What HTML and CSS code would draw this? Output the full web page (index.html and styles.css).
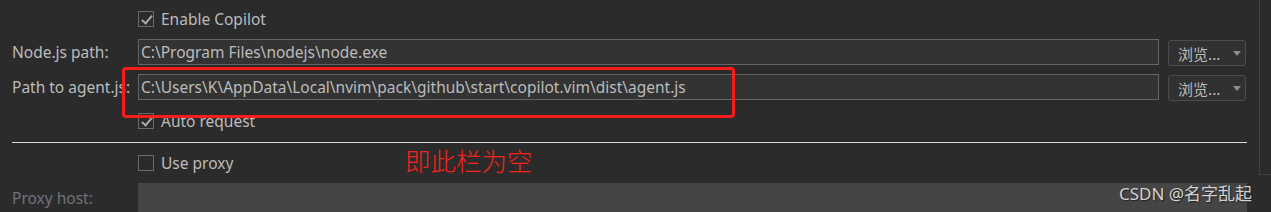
FILE: index.html
```html
<!DOCTYPE html>
<html lang="zh">

<head>
    <meta charset="UTF-8" />
    <title>Copilot</title>
    <link rel="stylesheet" href="styles.css">
</head>

<body>
    <div class="window">
        <div class="settings">
            <div class="check-row first">
                <span class="checkbox checked"></span>
                <span class="check-label">Enable Copilot</span>
            </div>

            <div class="field-row node-row">
                <span class="label">Node.js path:</span>
                <div class="input">C:\Program Files\nodejs\node.exe</div>
                <button class="browse">浏览... <span class="arrow"></span></button>
            </div>

            <div class="field-row agent-row">
                <span class="label">Path to agent.js:</span>
                <div class="input">C:\Users\K\AppData\Local\nvim\pack\github\start\copilot.vim\dist\agent.js</div>
                <button class="browse">浏览... <span class="arrow"></span></button>
            </div>

            <div class="check-row auto-row">
                <span class="checkbox checked"></span>
                <span class="check-label">Auto request</span>
            </div>

            <hr class="separator">

            <div class="check-row proxy-row">
                <span class="checkbox"></span>
                <span class="check-label">Use proxy</span>
            </div>

            <div class="field-row host-row">
                <span class="label disabled">Proxy host:</span>
                <div class="input input-disabled"></div>
            </div>
        </div>
        <div class="scroll-strip"></div>
    </div>

    <!-- 注释用的红框和文字 -->
    <div class="mark-box"></div>
    <div class="mark-text">即此栏为空</div>
    <div class="watermark">CSDN @名字乱起</div>
</body>

</html>
```

FILE: styles.css
```css
body {
    margin: 0;
    background-color: #2b2b2b;
    color: #bbbbbb;
    font-family: 'Noto Sans', 'Noto Sans CJK SC', sans-serif;
    font-size: 15.5px;
    width: 1271px;
    height: 212px;
    overflow: hidden;
}

.window {
    display: flex;
}

.settings {
    width: 1235px;
    padding: 11px 12px 0 12px;
}

.scroll-strip {
    width: 11px;
    height: 174px;
    border-left: 1px solid #414141;
    border-bottom: 1px solid #414141;
}

.check-row {
    display: flex;
    align-items: center;
    height: 16px;
    padding-left: 126px;
}

.checkbox {
    position: relative;
    box-sizing: border-box;
    width: 16px;
    height: 16px;
    border: 1px solid #6b6b6b;
    background-color: #2b2b2b;
}

/* チェックマーク */
.checkbox.checked::after {
    content: "";
    position: absolute;
    left: 5px;
    top: 1px;
    width: 4px;
    height: 9px;
    border-right: 2px solid #a9a9a9;
    border-bottom: 2px solid #a9a9a9;
    transform: rotate(40deg);
}

.check-label {
    margin-left: 7px;
    line-height: 16px;
}

.field-row {
    display: flex;
    align-items: center;
    height: 26px;
}

.node-row {
    margin-top: 12px;
}

.agent-row {
    margin-top: 9px;
}

.auto-row {
    margin-top: 13px;
}

.separator {
    margin: 13px 0 0 0;
    border: none;
    height: 1px;
    background-color: #d6d6d6;
}

.proxy-row {
    margin-top: 12px;
}

.host-row {
    margin-top: 12px;
    height: 29px;
}

.label {
    width: 126px;
    flex: none;
    white-space: nowrap;
}

.label.disabled {
    color: #6e737a;
}

.input {
    box-sizing: border-box;
    width: 1021px;
    height: 26px;
    border: 1px solid #646464;
    background-color: #333333;
    padding-left: 2px;
    line-height: 24px;
    white-space: nowrap;
}

.input-disabled {
    width: 1109px;
    height: 29px;
    border: none;
    background-color: #454545;
}

.browse {
    box-sizing: border-box;
    margin-left: 9px;
    margin-top: 2px;
    width: 78px;
    height: 26px;
    border: 1px solid #4a4c4d;
    border-radius: 3px;
    background-color: #313131;
    color: #bbbbbb;
    font-family: 'Noto Sans CJK SC', sans-serif;
    font-size: 15px;
    text-align: left;
    padding: 0 0 0 9px;
    display: flex;
    align-items: center;
}

.arrow {
    margin-left: auto;
    margin-right: 4px;
    width: 0;
    height: 0;
    border-left: 4px solid transparent;
    border-right: 4px solid transparent;
    border-top: 5px solid #8c8c8c;
}

.mark-box {
    position: absolute;
    left: 122px;
    top: 67px;
    width: 607px;
    height: 45px;
    border: 3px solid #f51c1c;
    border-radius: 4px;
}

.mark-text {
    position: absolute;
    left: 405px;
    top: 146px;
    color: #f5231c;
    font-family: 'Noto Sans CJK SC', sans-serif;
    font-weight: 300;
    font-size: 25.5px;
    line-height: 28px;
}

.watermark {
    position: absolute;
    left: 1119px;
    top: 183px;
    color: #d2d2d2;
    font-family: 'Noto Sans', 'Noto Sans CJK SC', sans-serif;
    font-size: 17px;
    line-height: 22px;
    text-shadow: 1px 1px 1px #222222;
}
```
